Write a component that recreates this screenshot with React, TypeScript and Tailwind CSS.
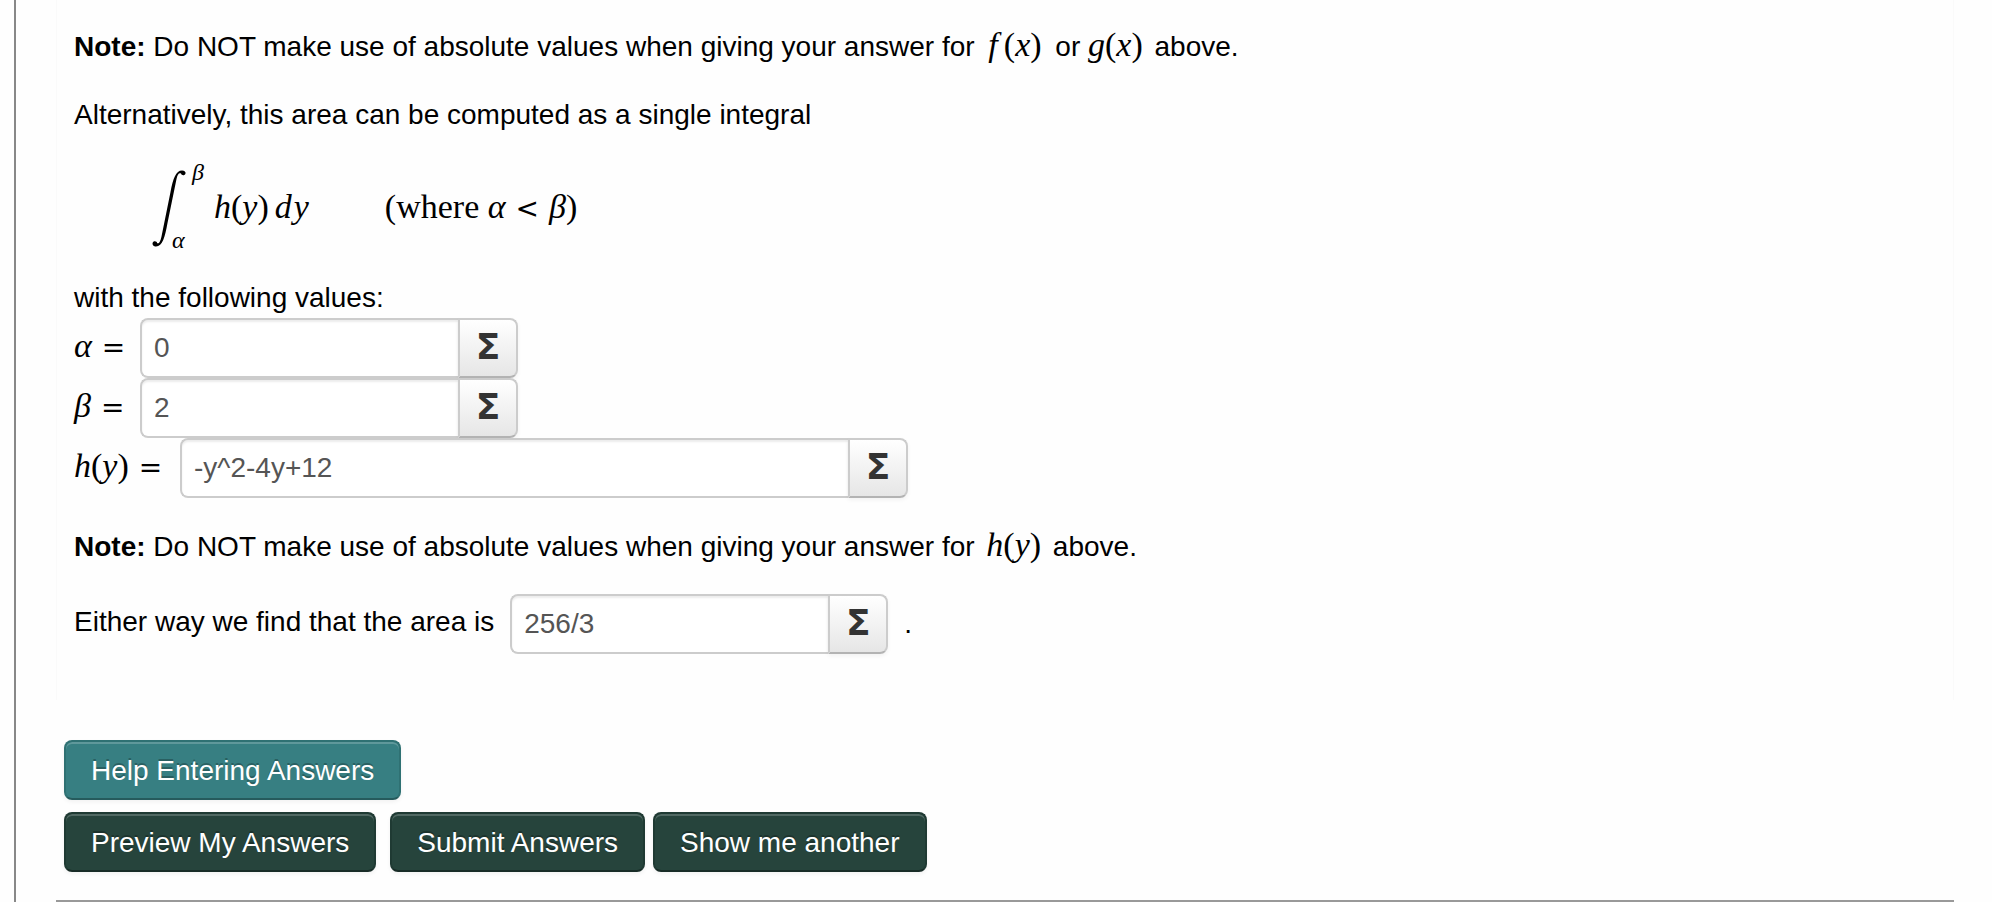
import { useState, type ReactNode } from "react";

const sans = "font-['Liberation_Sans',sans-serif]";

function Math({ children }: { children: ReactNode }) {
  return (
    <span className="font-['Liberation_Serif',serif] text-[34px] leading-none italic whitespace-nowrap">
      {children}
    </span>
  );
}

function Up({ children }: { children: ReactNode }) {
  return <span className="not-italic">{children}</span>;
}

// relation signs are drawn wider than the serif face has them
function Rel({ children }: { children: ReactNode }) {
  return (
    <span className="mx-2.5 font-['DejaVu_Sans',sans-serif] text-[28px] leading-none not-italic">
      {children}
    </span>
  );
}

function Integral() {
  return (
    <svg viewBox="0 0 34 78" className="mt-2 h-[78px] w-[34px]" aria-hidden="true">
      <path d="M33.500 4.500 C33 7 29.500 6.800 29 4.600 C27 3.600 25.500 5.500 24.500 10 L15.500 54 C13 68 10.500 77.500 4 77.500 C1 77.500 0 75 0.800 73.500 C1.800 71.500 5 72 5.200 74.200 C7.500 75 8.800 71 9.800 66 L18.500 23 C21 9.500 24 1.500 30 1.500 C32.500 1.500 34 3 33.500 4.500 Z" />
    </svg>
  );
}

interface AnswerFieldProps {
  id: string;
  value: string;
  label: string;
  wide?: boolean;
}

function AnswerField({ id, value, label, wide = false }: AnswerFieldProps) {
  const [answer, setAnswer] = useState(value);

  return (
    <span className="inline-flex h-[60px]">
      <input
        id={id}
        type="text"
        value={answer}
        onChange={(e) => setAnswer(e.target.value)}
        className={`${wide ? "w-[668px]" : "w-[318px]"} rounded-l-lg border-2 border-r-0 border-[#ccc] bg-white px-3 text-[28px] text-[#555] shadow-[inset_0_2px_2px_rgba(0,0,0,0.075)] outline-none`}
      />
      <button
        type="button"
        aria-label={`Equation editor for ${label}`}
        className="flex w-[60px] items-center justify-center rounded-r-lg border-2 border-[#ccc] border-b-[#b3b3b3] bg-linear-to-b from-white to-[#e6e6e6] pb-0.5 font-['DejaVu_Sans',sans-serif] text-[36px] leading-none font-bold text-[#333] shadow-[0_2px_4px_rgba(0,0,0,0.05)]"
      >
        Σ
      </button>
    </span>
  );
}

const actions = ["Preview My Answers", "Submit Answers", "Show me another"];

export default function App() {
  return (
    <main className={`${sans} min-h-screen bg-[#fefefe] pl-3.5 text-[28px] leading-[42px] text-black`}>
      <div className="min-h-screen border-l-2 border-[#888] pr-[38px] pl-10">
        <section className="border-x border-[#fafafa] pt-[26px] pb-[46px] pl-[17px]">
          <p>
            <b>Note:</b> Do NOT make use of absolute values when giving your answer for{" "}
            <span className="mx-1.5"><Math>f<span className="ml-1.5 not-italic">(</span>x<Up>)</Up></Math></span>{" "}
            or <span className="mr-1"><Math>g<Up>(</Up>x<Up>)</Up></Math></span> above.
          </p>
          <p className="mt-[26px]">Alternatively, this area can be computed as a single integral</p>

          <div className="mt-6 ml-[78px] flex h-[88px] items-center">
            <Integral />
            <div className="flex h-full w-7 flex-col justify-between">
              <span className="pl-1.5 font-['Liberation_Serif',serif] text-2xl leading-6 italic">β</span>
              <span className="-ml-3.5 font-['Liberation_Serif',serif] text-2xl leading-4 italic">α</span>
            </div>
            <div className="flex items-baseline pt-2.5">
              <Math>h<Up>(</Up>y<Up>)</Up></Math>
              <span className="ml-1.5"><Math>d<span className="ml-0.5">y</span></Math></span>
              <span className="ml-[76px]">
                <Math><Up>(where </Up>α<Rel>&lt;</Rel>β<Up>)</Up></Math>
              </span>
            </div>
          </div>

          <p className="mt-[30px] leading-10">with the following values:</p>
          <div className="flex items-center">
            <label htmlFor="alpha" className="w-[66px] whitespace-nowrap"><Math>α<Rel>=</Rel></Math></label>
            <AnswerField id="alpha" value="0" label="alpha" />
          </div>
          <div className="flex items-center">
            <label htmlFor="beta" className="w-[66px] whitespace-nowrap"><Math>β<Rel>=</Rel></Math></label>
            <AnswerField id="beta" value="2" label="beta" />
          </div>
          <div className="flex items-center">
            <label htmlFor="hy" className="w-[106px] whitespace-nowrap"><Math>h<Up>(</Up>y<Up>)</Up><Rel>=</Rel></Math></label>
            <AnswerField id="hy" value="-y^2-4y+12" label="h(y)" wide />
          </div>

          <p className="mt-7">
            <b>Note:</b> Do NOT make use of absolute values when giving your answer for{" "}
            <span className="mx-1"><Math>h<Up>(</Up>y<Up>)</Up></Math></span> above.
          </p>
          <div className="mt-[26px] flex items-center gap-4">
            <label htmlFor="area" className="pb-1">Either way we find that the area is</label>
            <AnswerField id="area" value="256/3" label="area" />
            <span>.</span>
          </div>
        </section>

        <div className="mt-10 ml-2 flex flex-col items-start gap-3">
          <button
            type="button"
            className="h-[60px] rounded-lg border-2 border-[#2f7173] border-b-[#265b5d] bg-[#377f82] px-[25px] pt-0.5 text-white shadow-[inset_0_2px_0_rgba(255,255,255,0.2),0_2px_4px_rgba(0,0,0,0.05)] text-shadow-[0_-2px_0_rgba(0,0,0,0.25)]"
          >
            Help Entering Answers
          </button>
          <div className="flex gap-2">
            {actions.map((label) => (
              <button
                key={label}
                type="button"
                className="h-[60px] rounded-lg border-2 border-[#1f3a33] border-b-[#182c27] bg-[#26443c] px-[25px] pt-0.5 text-white shadow-[inset_0_2px_0_rgba(255,255,255,0.2),0_2px_4px_rgba(0,0,0,0.05)] text-shadow-[0_-2px_0_rgba(0,0,0,0.25)] first:mr-1.5"
              >
                {label}
              </button>
            ))}
          </div>
        </div>
        <hr className="mt-7 border-t-2 border-[#999]" />
      </div>
    </main>
  );
}
